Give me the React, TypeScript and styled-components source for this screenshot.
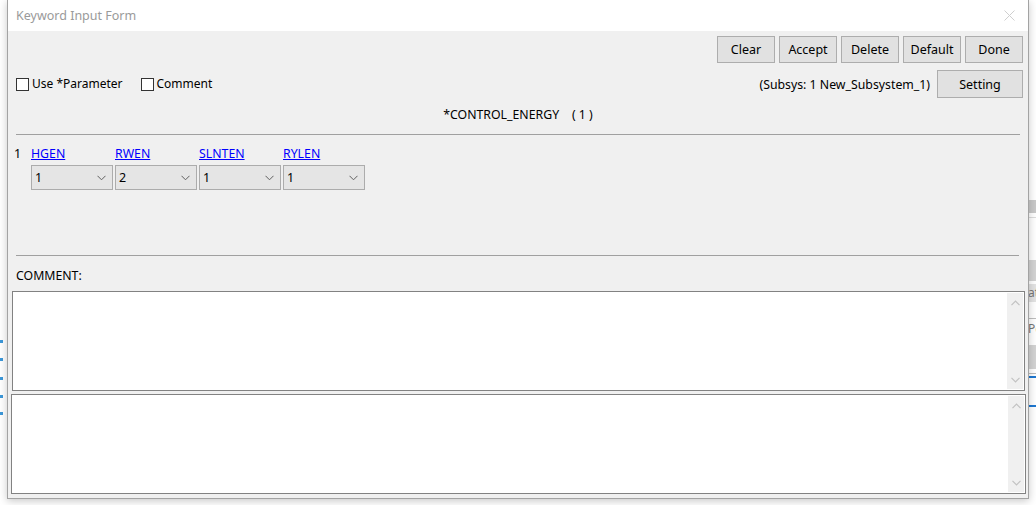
import React from "react";
import styled, { createGlobalStyle } from "styled-components";

const GlobalStyle = createGlobalStyle`
  html, body {
    margin: 0;
    padding: 0;
    background: #ffffff;
  }
  * {
    box-sizing: border-box;
  }
`;

const FONT = `"Noto Sans", "Liberation Sans", Arial, sans-serif`;

// Desktop behind the dialog
const Desktop = styled.div`
  position: relative;
  width: 1036px;
  height: 505px;
  overflow: hidden;
  background: #ffffff;
  font-family: ${FONT};
  font-size: 12px;
  color: #000;
`;

const BackDot = styled.div<{ $top: number }>`
  position: absolute;
  left: 0;
  top: ${(p) => p.$top}px;
  width: 3px;
  height: 3px;
  background: #3c97d9;
`;

const BackStrip = styled.div<{ $top: number; $h: number; $bg: string }>`
  position: absolute;
  left: 1028px;
  width: 10px;
  top: ${(p) => p.$top}px;
  height: ${(p) => p.$h}px;
  background: ${(p) => p.$bg};
`;

const BackText = styled.div<{ $top: number }>`
  position: absolute;
  left: 1028px;
  top: ${(p) => p.$top}px;
  font-size: 12px;
  line-height: 16px;
  color: #777;
`;

// Dialog window
const Window = styled.div`
  position: absolute;
  left: 7px;
  top: 0;
  width: 1022px;
  border: 1px solid #a3a3a3;
  border-top: none;
  background: #f0f0f0;
  box-shadow: 0 2px 8px rgba(0, 0, 0, 0.22);
  display: flex;
  flex-direction: column;
`;

const TitleBar = styled.div`
  height: 31px;
  background: #ffffff;
  display: flex;
  align-items: center;
  justify-content: space-between;
  padding: 0 8px 0 8px;
`;

const TitleText = styled.span`
  font-size: 12.5px;
  color: #9a9a9a;
  line-height: 16px;
`;

const CloseIcon = styled.svg`
  width: 11px;
  height: 11px;
  margin-right: 5px;
`;

const Body = styled.div`
  display: flex;
  flex-direction: column;
  padding: 0 0 4px 0;
`;

const ButtonRow = styled.div`
  margin-top: 5px;
  display: flex;
  justify-content: flex-end;
  gap: 4px;
  padding-right: 5px;
`;

const Button = styled.button<{ $w?: number; $h?: number }>`
  width: ${(p) => p.$w ?? 58}px;
  height: ${(p) => p.$h ?? 27}px;
  background: #e1e1e1;
  border: 1px solid #adadad;
  border-radius: 0;
  font-family: ${FONT};
  font-size: 12.5px;
  color: #000;
  padding: 0;
  cursor: pointer;
`;

const OptionsRow = styled.div`
  margin-top: 7px;
  display: flex;
  align-items: center;
  padding: 0 5px 0 8px;
`;

const CheckLabel = styled.label`
  display: flex;
  align-items: center;
  gap: 3px;
  margin-right: 18px;
  font-size: 12px;
  line-height: 16px;
`;

const CheckBox = styled.input`
  appearance: none;
  margin: 0;
  width: 13px;
  height: 13px;
  border: 1px solid #333;
  background: #fff;
`;

const Spacer = styled.div`
  flex: 1;
`;

const SubsysText = styled.span`
  font-size: 12.3px;
  margin-right: 7px;
`;

const Heading = styled.div`
  margin-top: 7px;
  height: 20px;
  line-height: 20px;
  text-align: center;
  font-size: 12.3px;
  white-space: pre;
`;

const Separator = styled.div<{ $mt: number; $right: number }>`
  margin: ${(p) => p.$mt}px ${(p) => p.$right}px 0 8px;
  height: 1px;
  background: #a0a0a0;
`;

const ParamRow = styled.div`
  margin-top: 11px;
  display: flex;
  padding-left: 6px;
`;

const RowIndex = styled.span`
  width: 17px;
  font-size: 12.5px;
  line-height: 16px;
`;

const ParamGrid = styled.div`
  display: grid;
  grid-template-columns: repeat(4, 82px);
  column-gap: 2px;
  row-gap: 3px;
`;

const ParamLink = styled.a`
  font-size: 12.3px;
  line-height: 16px;
  color: #0000ff;
  text-decoration: underline;
  cursor: pointer;
`;

const SelectBox = styled.div`
  position: relative;
  height: 25px;
  background: #e5e5e5;
  border: 1px solid #acacac;
  display: flex;
  align-items: center;
  padding-left: 3px;
  font-size: 12.5px;
`;

const Chevron = styled.svg`
  position: absolute;
  right: 6px;
  top: 9px;
  width: 9px;
  height: 6px;
`;

const CommentLabel = styled.div`
  margin-top: 11px;
  padding-left: 8px;
  font-size: 12.3px;
  line-height: 18px;
`;

const TextBox = styled.div<{ $mt: number; $left: number; $right: number }>`
  margin: ${(p) => p.$mt}px ${(p) => p.$right}px 0 ${(p) => p.$left}px;
  height: 100px;
  border: 1px solid #828282;
  background: #fff;
  display: flex;
`;

const TextArea = styled.textarea`
  flex: 1;
  border: none;
  outline: none;
  resize: none;
  background: transparent;
  font-family: ${FONT};
  font-size: 12px;
  overflow: hidden;
`;

const ScrollTrack = styled.div`
  width: 16px;
  margin: 1px 1px 1px 0;
  background: #f0f0f0;
  display: flex;
  flex-direction: column;
  justify-content: space-between;
  align-items: center;
  padding: 7px 0 6px;
`;

const ScrollArrow = styled.svg`
  width: 9px;
  height: 6px;
`;

const ChevronDown = () => (
  <Chevron viewBox="0 0 9 6">
    <path d="M0.5 0.8 L4.5 4.8 L8.5 0.8" fill="none" stroke="#606060" strokeWidth="1" />
  </Chevron>
);

const ScrollBar = () => (
  <ScrollTrack>
    <ScrollArrow viewBox="0 0 9 6">
      <path d="M0.5 5.2 L4.5 1.2 L8.5 5.2" fill="none" stroke="#c2c2c2" strokeWidth="1.2" />
    </ScrollArrow>
    <ScrollArrow viewBox="0 0 9 6">
      <path d="M0.5 0.8 L4.5 4.8 L8.5 0.8" fill="none" stroke="#c2c2c2" strokeWidth="1.2" />
    </ScrollArrow>
  </ScrollTrack>
);

const params = [
  { name: "HGEN", value: "1" },
  { name: "RWEN", value: "2" },
  { name: "SLNTEN", value: "1" },
  { name: "RYLEN", value: "1" },
];

const App: React.FC = () => {
  return (
    <>
      <GlobalStyle />
      <Desktop>
        {/* background bits peeking around the dialog */}
        {[340, 358, 377, 395, 412].map((t) => (
          <BackDot key={t} $top={t} />
        ))}
        <BackStrip $top={200} $h={13} $bg="#c9c9c9" />
        <BackStrip $top={217} $h={1} $bg="#dcdcdc" />
        <BackStrip $top={260} $h={21} $bg="#d3d3d3" />
        <BackStrip $top={284} $h={18} $bg="#e3e3e3" />
        <BackText $top={285}>at</BackText>
        <BackStrip $top={318} $h={1} $bg="#bdbdbd" />
        <BackText $top={321}>Pe</BackText>
        <BackStrip $top={345} $h={24} $bg="#d3d3d3" />
        <BackStrip $top={373} $h={1} $bg="#bdbdbd" />
        <BackStrip $top={376} $h={2} $bg="#1e78d2" />
        <BackStrip $top={405} $h={2} $bg="#1e78d2" />

        <Window>
          <TitleBar>
            <TitleText>Keyword Input Form</TitleText>
            <CloseIcon viewBox="0 0 11 11">
              <path d="M0.5 0.5 L10.5 10.5 M10.5 0.5 L0.5 10.5" stroke="#cfcfcf" strokeWidth="1" />
            </CloseIcon>
          </TitleBar>

          <Body>
            <ButtonRow>
              <Button>Clear</Button>
              <Button>Accept</Button>
              <Button>Delete</Button>
              <Button>Default</Button>
              <Button>Done</Button>
            </ButtonRow>

            <OptionsRow>
              <CheckLabel>
                <CheckBox type="checkbox" />
                Use *Parameter
              </CheckLabel>
              <CheckLabel>
                <CheckBox type="checkbox" />
                Comment
              </CheckLabel>
              <Spacer />
              <SubsysText>(Subsys: 1 New_Subsystem_1)</SubsysText>
              <Button $w={86} $h={28}>Setting</Button>
            </OptionsRow>

            <Heading>{"*CONTROL_ENERGY    ( 1 )"}</Heading>

            <Separator $mt={9} $right={8} />

            <ParamRow>
              <RowIndex>1</RowIndex>
              <ParamGrid>
                {params.map((p) => (
                  <ParamLink key={p.name}>{p.name}</ParamLink>
                ))}
                {params.map((p) => (
                  <SelectBox key={p.name + "-sel"}>
                    {p.value}
                    <ChevronDown />
                  </SelectBox>
                ))}
              </ParamGrid>
            </ParamRow>

            <Separator $mt={65} $right={9} />

            <CommentLabel>COMMENT:</CommentLabel>

            <TextBox $mt={6} $left={4} $right={3}>
              <TextArea />
              <ScrollBar />
            </TextBox>
            <TextBox $mt={3} $left={3} $right={2}>
              <TextArea />
              <ScrollBar />
            </TextBox>
          </Body>
        </Window>
      </Desktop>
    </>
  );
};

export default App;
